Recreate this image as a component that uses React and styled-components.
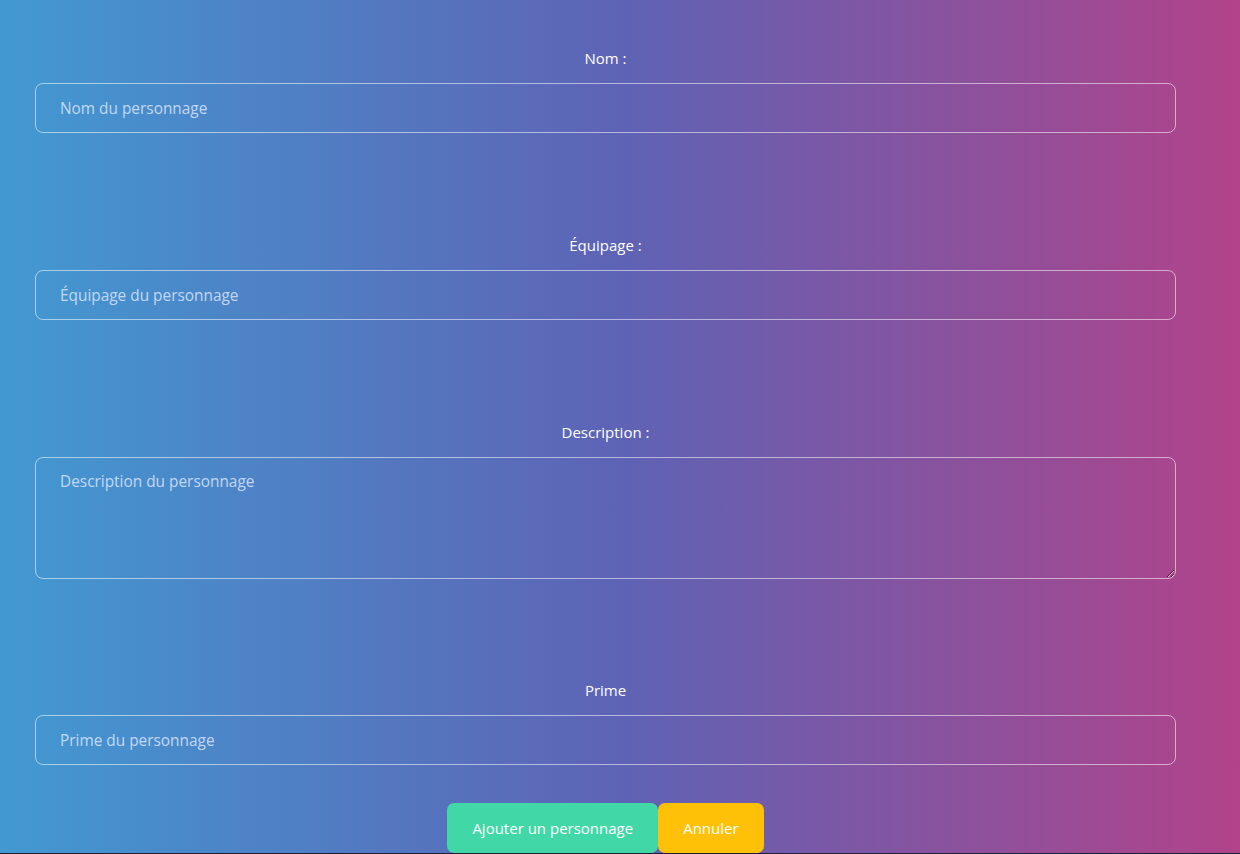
import React from 'react';
import styled, { createGlobalStyle } from 'styled-components';

const GlobalStyle = createGlobalStyle`
  * {
    box-sizing: border-box;
  }
  body {
    margin: 0;
    background: #1c1c33;
    font-family: "Open Sans", "Noto Sans", sans-serif;
  }
`;

const Page = styled.div`
  height: 853px;
  overflow: hidden;
  background: linear-gradient(to right, #4299d2 0%, #5e63b5 50%, #b1438a 100%);
  padding: 48px 64px 0 35px;
`;

const Form = styled.form`
  display: flex;
  flex-direction: column;
`;

const Group = styled.div`
  display: flex;
  flex-direction: column;
  margin-bottom: ${(p) => p.$space || '102px'};
`;

const Label = styled.label`
  display: block;
  text-align: center;
  color: #ffffff;
  font-size: 15px;
  line-height: 20px;
  margin-bottom: 15px;
`;

const fieldCss = `
  width: 100%;
  border: 1px solid rgba(255, 255, 255, 0.55);
  border-radius: 8px;
  background: transparent;
  color: #ffffff;
  font-family: "Open Sans", "Noto Sans", sans-serif;
  font-size: 15.4px;
  padding: 0 24px;
  outline: none;
  &::placeholder {
    color: rgba(225, 235, 255, 0.8);
  }
`;

const Input = styled.input`
  ${fieldCss}
  height: 50px;
`;

const TextArea = styled.textarea`
  ${fieldCss}
  height: 122px;
  padding-top: 13px;
  line-height: 22px;
  resize: vertical;
  display: block;
`;

const Actions = styled.div`
  display: flex;
  justify-content: center;
`;

const Button = styled.button`
  height: 50px;
  border: none;
  border-radius: 7px;
  padding: 0 25px;
  background: ${(p) => (p.$variant === 'cancel' ? '#ffc107' : '#42d7a7')};
  color: #ffffff;
  font-family: "Open Sans", "Noto Sans", sans-serif;
  font-size: 15px;
  cursor: pointer;
`;

export default function App() {
  return (
    <>
      <GlobalStyle />
      <Page>
        <Form onSubmit={(e) => e.preventDefault()}>
          <Group>
            <Label htmlFor="nom">Nom :</Label>
            <Input id="nom" placeholder="Nom du personnage" />
          </Group>
          <Group>
            <Label htmlFor="equipage">Équipage :</Label>
            <Input id="equipage" placeholder="Équipage du personnage" />
          </Group>
          <Group $space="101px">
            <Label htmlFor="description">Description :</Label>
            <TextArea id="description" placeholder="Description du personnage" />
          </Group>
          <Group $space="38px">
            <Label htmlFor="prime">Prime</Label>
            <Input id="prime" placeholder="Prime du personnage" />
          </Group>
          <Actions>
            <Button type="submit">Ajouter un personnage</Button>
            <Button type="button" $variant="cancel">Annuler</Button>
          </Actions>
        </Form>
      </Page>
    </>
  );
}
